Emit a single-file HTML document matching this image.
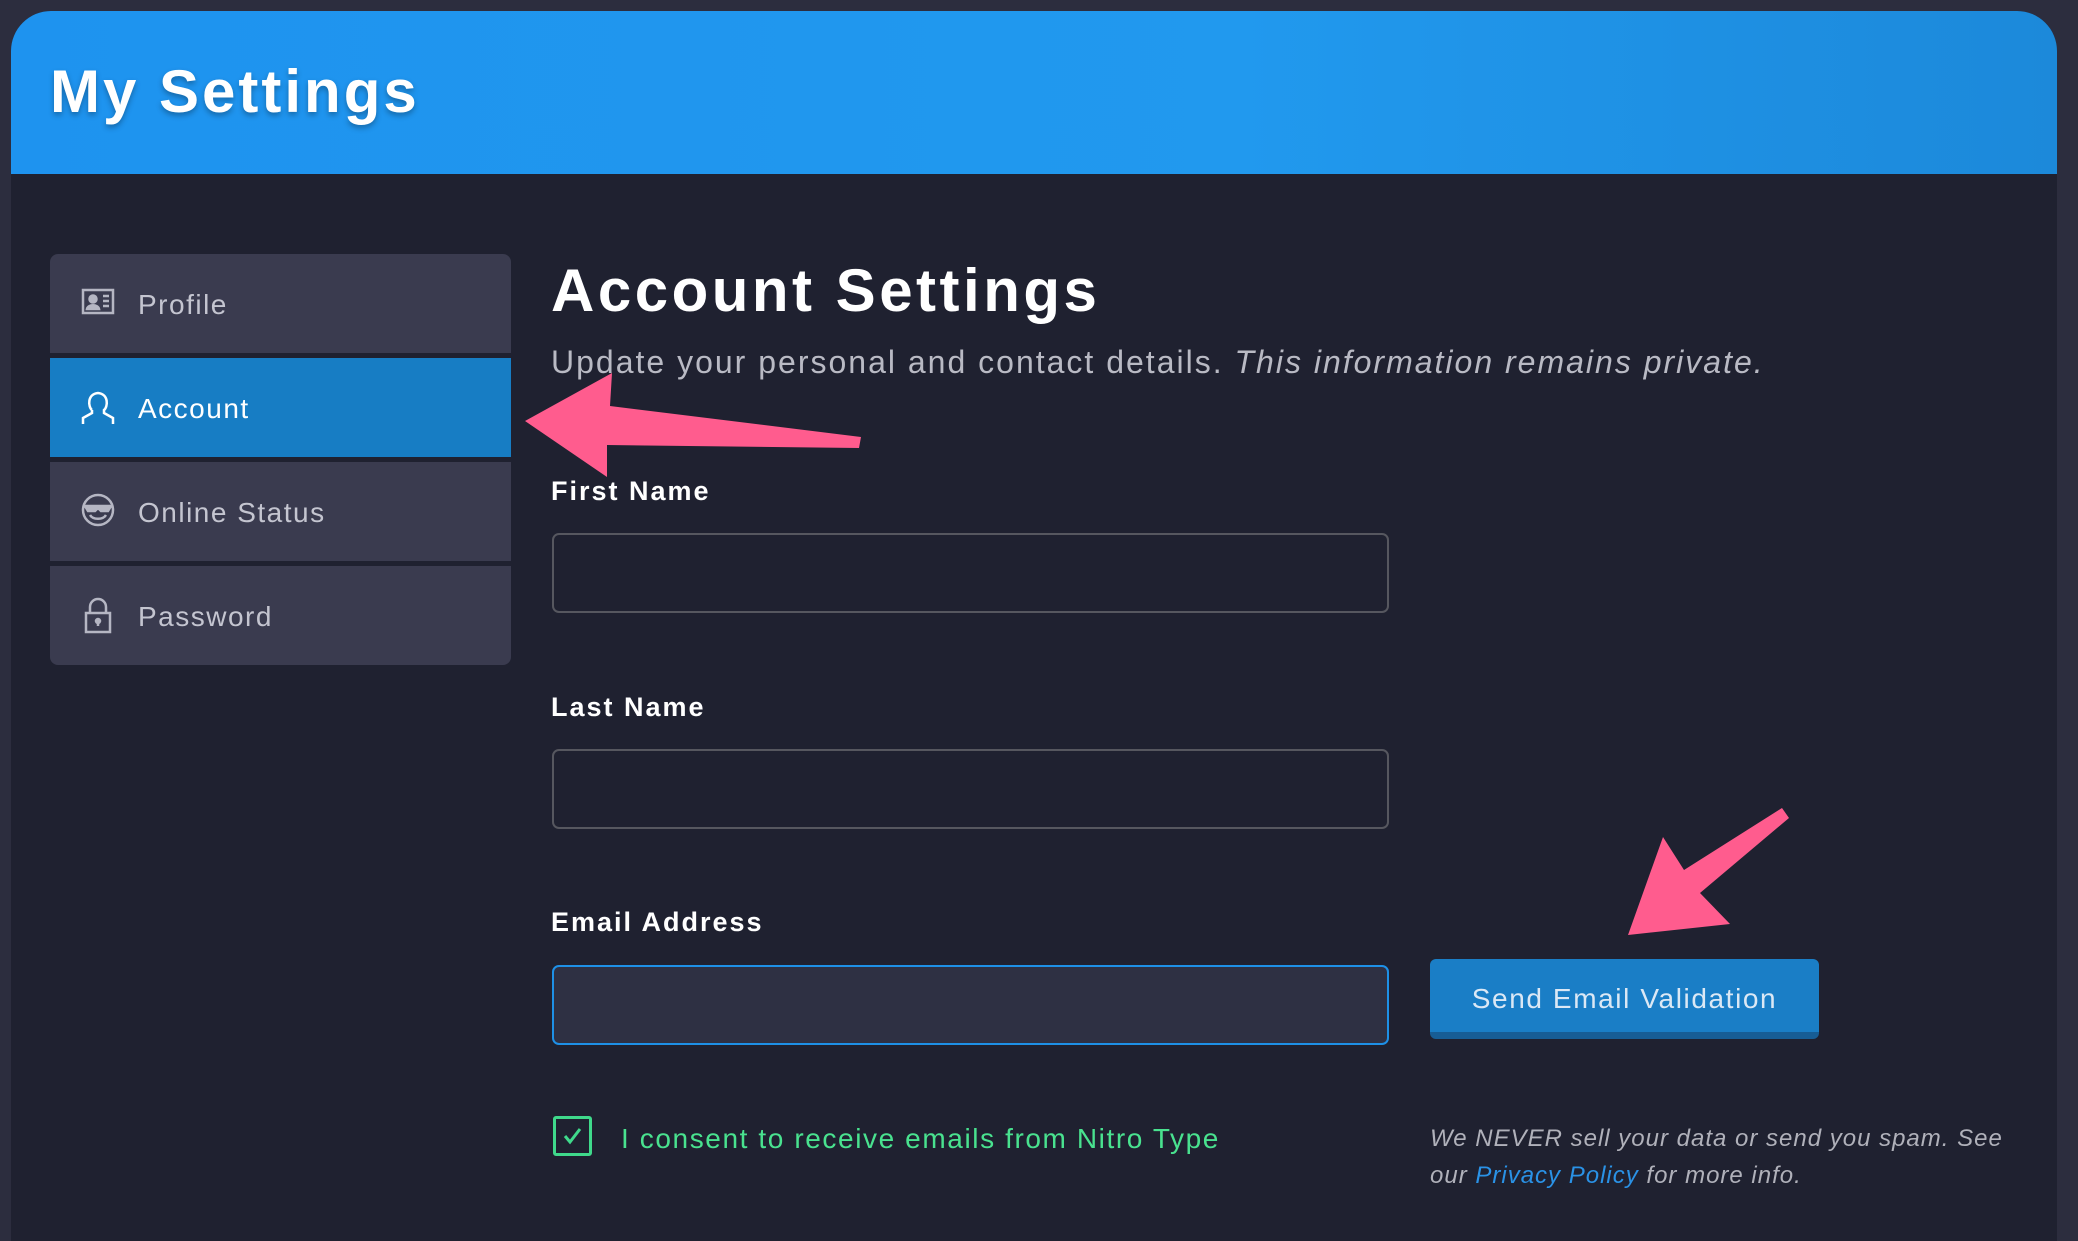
<!DOCTYPE html>
<html><head><meta charset="utf-8"><style>
*{margin:0;padding:0;box-sizing:border-box}
body{width:2078px;height:1222px;background:#2c2d3e;font-family:"Liberation Sans",sans-serif;position:relative;overflow:hidden}
.card{position:absolute;left:11px;top:11px;width:2046px;height:1230px;background:#1f2130;border-radius:40px 40px 0 0;overflow:hidden}
.hdr{position:absolute;left:0;top:0;width:100%;height:163px;background:linear-gradient(90deg,#1e93ef,#2199ee 60%,#1c89da)}
.hdr h1{position:absolute;left:39px;top:46px;font-size:60px;color:#fff;font-weight:bold;text-shadow:0 3px 6px rgba(0,0,0,.3);letter-spacing:3px}
.side{position:absolute;left:50px;top:254px;width:461px}
.item{height:99px;background:#3a3b4f;margin-bottom:5px;position:relative;color:#c4c5d0;font-size:28px;letter-spacing:1.5px}
.item:first-child{border-radius:8px 8px 0 0}
.item:last-child{border-radius:0 0 8px 8px}
.item.act{background:#177dc4;color:#fff}
.item span{position:absolute;left:88px;top:35px}
.item svg{position:absolute;left:30px;top:30px}
.abs{position:absolute}
h2{position:absolute;left:551px;top:256px;font-size:60px;color:#fff;font-weight:bold;letter-spacing:3.5px}
.sub{left:551px;top:344px;font-size:32px;color:#b9bac4;letter-spacing:2px}
.lbl{font-size:27px;color:#fff;font-weight:bold;left:551px;letter-spacing:2px}
.inp{left:552px;width:837px;height:80px;border:2px solid #56575f;border-radius:7px;background:#1f2130}
</style></head><body>
<div class="card">
<div class="hdr"><h1>My Settings</h1></div>
</div>
<div class="side">
<div class="item"><svg width="36" height="36" viewBox="0 0 36 36" fill="none" stroke="#b5b6c3" stroke-width="2.5"><rect x="3" y="6" width="30" height="23"/><circle cx="13" cy="15" r="3.5" fill="#b5b6c3"/><path d="M7 25c1-5 11-5 12 0z" fill="#b5b6c3"/><path d="M23 12h6M23 17h6M23 22h6"/></svg><span>Profile</span></div>
<div class="item act"><svg width="36" height="40" viewBox="0 0 36 40" fill="none" stroke="#fff" stroke-width="2.5"><path d="M12 22c-4-3-5-16 6-17 11 1 10 14 6 17l0 3 9 5v6M12 22v3l-9 5v6"/></svg><span>Account</span></div>
<div class="item"><svg width="36" height="36" viewBox="0 0 36 36" fill="none" stroke="#b5b6c3" stroke-width="2.5"><circle cx="18" cy="18" r="15"/><path d="M5 14h26l-3 5h-7l-3-3-3 3H8z" fill="#b5b6c3"/><path d="M10 23c3 5 13 5 16 0"/></svg><span>Online Status</span></div>
<div class="item"><svg width="36" height="40" viewBox="0 0 36 40" fill="none" stroke="#b5b6c3" stroke-width="2.5"><path d="M10 17v-6a8 8 0 0 1 16 0v6"/><rect x="6" y="17" width="24" height="19"/><path d="M18 25v5"/><circle cx="18" cy="25" r="2" fill="#b5b6c3"/></svg><span>Password</span></div>
</div>
<h2>Account Settings</h2>
<div class="abs sub">Update your personal and contact details. <i>This information remains private.</i></div>
<div class="abs lbl" style="top:476px">First Name</div>
<div class="abs inp" style="top:533px"></div>
<div class="abs lbl" style="top:692px">Last Name</div>
<div class="abs inp" style="top:749px"></div>
<div class="abs lbl" style="top:907px">Email Address</div>
<div class="abs inp" style="top:965px;border-color:#1e90e6;background:#2e3043"></div>
<div class="abs" style="left:1430px;top:959px;width:389px;height:80px;background:#1a7ec6;border-radius:6px;border-bottom:7px solid #175d95;color:#dbe8f5;font-size:28px;text-align:center;line-height:80px;letter-spacing:1.6px">Send Email Validation</div>
<div class="abs" style="left:553px;top:1116px;width:39px;height:40px;border:3px solid #3fd98b;border-radius:3px"><svg width="33" height="34" viewBox="0 0 33 34"><path d="M9 17l5 6 10-13" fill="none" stroke="#3fd98b" stroke-width="3"/></svg></div>
<div class="abs" style="left:621px;top:1123px;font-size:28px;color:#49e28f;letter-spacing:1.6px">I consent to receive emails from Nitro Type</div>
<div class="abs" style="left:1430px;top:1120px;font-size:24px;color:#b0b1ba;font-style:italic;line-height:37px;width:600px;letter-spacing:1px">We NEVER sell your data or send you spam. See our <span style="color:#2a92e6">Privacy Policy</span> for more info.</div>
<svg class="abs" style="left:0;top:0" width="2078" height="1222"><g fill="#ff5c8e">
<polygon points="525,421 612,373 610,406 861,437 859,448 607,445 607,477"/>
<polygon points="1628,935 1663,837 1684,870 1782,808 1789,818 1700,893 1730,924"/></g></svg>
</body></html>
